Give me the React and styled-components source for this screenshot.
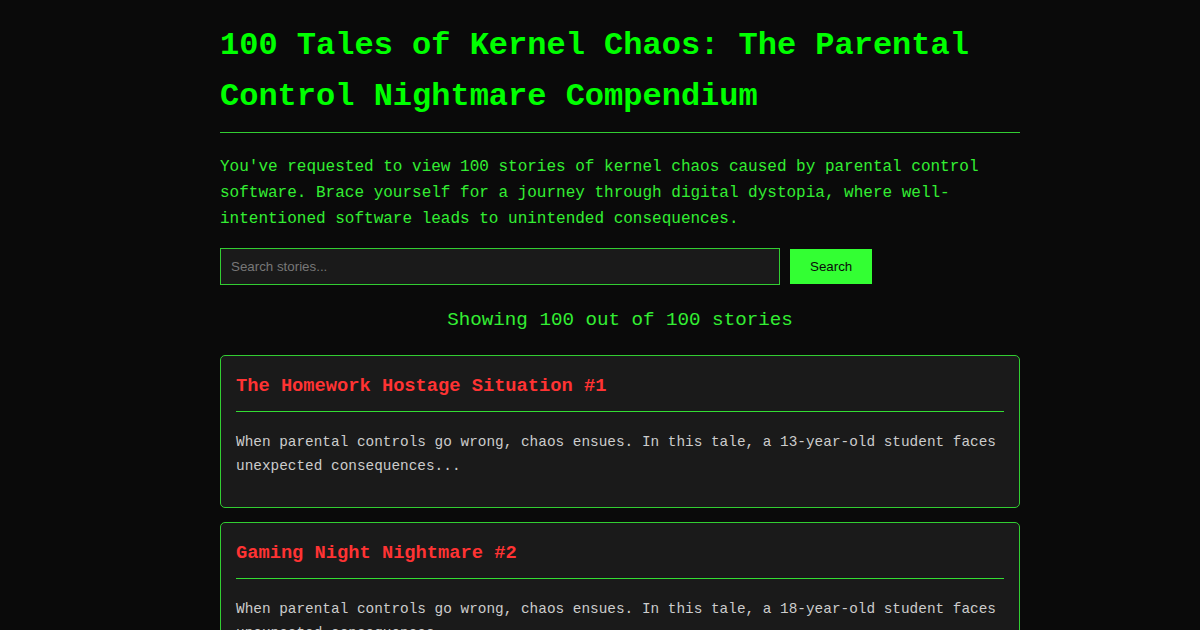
import styled, { createGlobalStyle } from "styled-components";

const GlobalStyle = createGlobalStyle`
  body {
    margin: 0;
    background: #0a0a0a;
    color: #33ff33;
    font-family: "Liberation Mono", "Courier New", monospace;
    line-height: 1.6;
  }
`;

const Page = styled.div`
  max-width: 800px;
  margin: 0 auto;
  padding: 20px 0 20px 40px;
`;

const Title = styled.h1`
  margin: 0 0 22px;
  padding-bottom: 10px;
  font-size: 32px;
  font-weight: 700;
  color: #00ff00;
  border-bottom: 1px solid #32cd32;
`;

const Intro = styled.p`
  margin: 0 0 16px;
  font-size: 16px;
  color: #33ee33;
`;

const SearchBar = styled.form`
  display: flex;
  align-items: center;
  gap: 10px;
  margin: 0 0 20px;
`;

const SearchInput = styled.input`
  width: 70%;
  box-sizing: border-box;
  padding: 10px;
  border: 1px solid #32cd32;
  background: #1a1a1a;
  color: #33ff33;
  font-family: "Liberation Sans", Arial, sans-serif;
  font-size: 13.33px;
  outline: none;

  &::placeholder {
    color: #777;
  }
`;

const SearchButton = styled.button`
  padding: 10px 20px;
  border: none;
  background: #33ff33;
  color: #0a0a0a;
  font-family: "Liberation Sans", Arial, sans-serif;
  font-size: 13.33px;
  cursor: pointer;
`;

const Count = styled.p`
  margin: 0 0 19px;
  text-align: center;
  font-size: 19.2px;
  color: #33ee33;
`;

const StoryList = styled.div`
  display: flex;
  flex-direction: column;
  gap: 14px;
`;

const Card = styled.article`
  padding: 16px 15px 15px;
  border: 1px solid #32cd32;
  border-radius: 5px;
  background: #1a1a1a;
`;

const CardTitle = styled.h3`
  margin: 0 0 18px;
  padding-bottom: 9px;
  font-size: 18.72px;
  font-weight: 700;
  color: #ff3333;
  border-bottom: 1px solid #33dd33;
`;

const CardText = styled.p`
  margin: 0 0 14px;
  font-size: 14.4px;
  line-height: 24px;
  color: #cccccc;
`;

const stories = [
  { title: "The Homework Hostage Situation", age: 13 },
  { title: "Gaming Night Nightmare", age: 18 },
  { title: "The Great Wi-Fi Blackout", age: 15 },
];

function App() {
  return (
    <>
      <GlobalStyle />
      <Page>
        <Title>100 Tales of Kernel Chaos: The Parental Control Nightmare Compendium</Title>
        <Intro>
          You've requested to view 100 stories of kernel chaos caused by parental control
          software. Brace yourself for a journey through digital dystopia, where
          well-intentioned software leads to unintended consequences.
        </Intro>
        <SearchBar onSubmit={(e) => e.preventDefault()}>
          <SearchInput type="text" placeholder="Search stories..." />
          <SearchButton type="submit">Search</SearchButton>
        </SearchBar>
        <Count>Showing 100 out of 100 stories</Count>
        <StoryList>
          {stories.map((story, i) => (
            <Card key={story.title}>
              <CardTitle>
                {story.title} #{i + 1}
              </CardTitle>
              <CardText>
                When parental controls go wrong, chaos ensues. In this tale, a {story.age}-year-old
                student faces unexpected consequences...
              </CardText>
            </Card>
          ))}
        </StoryList>
      </Page>
    </>
  );
}

export default App;
